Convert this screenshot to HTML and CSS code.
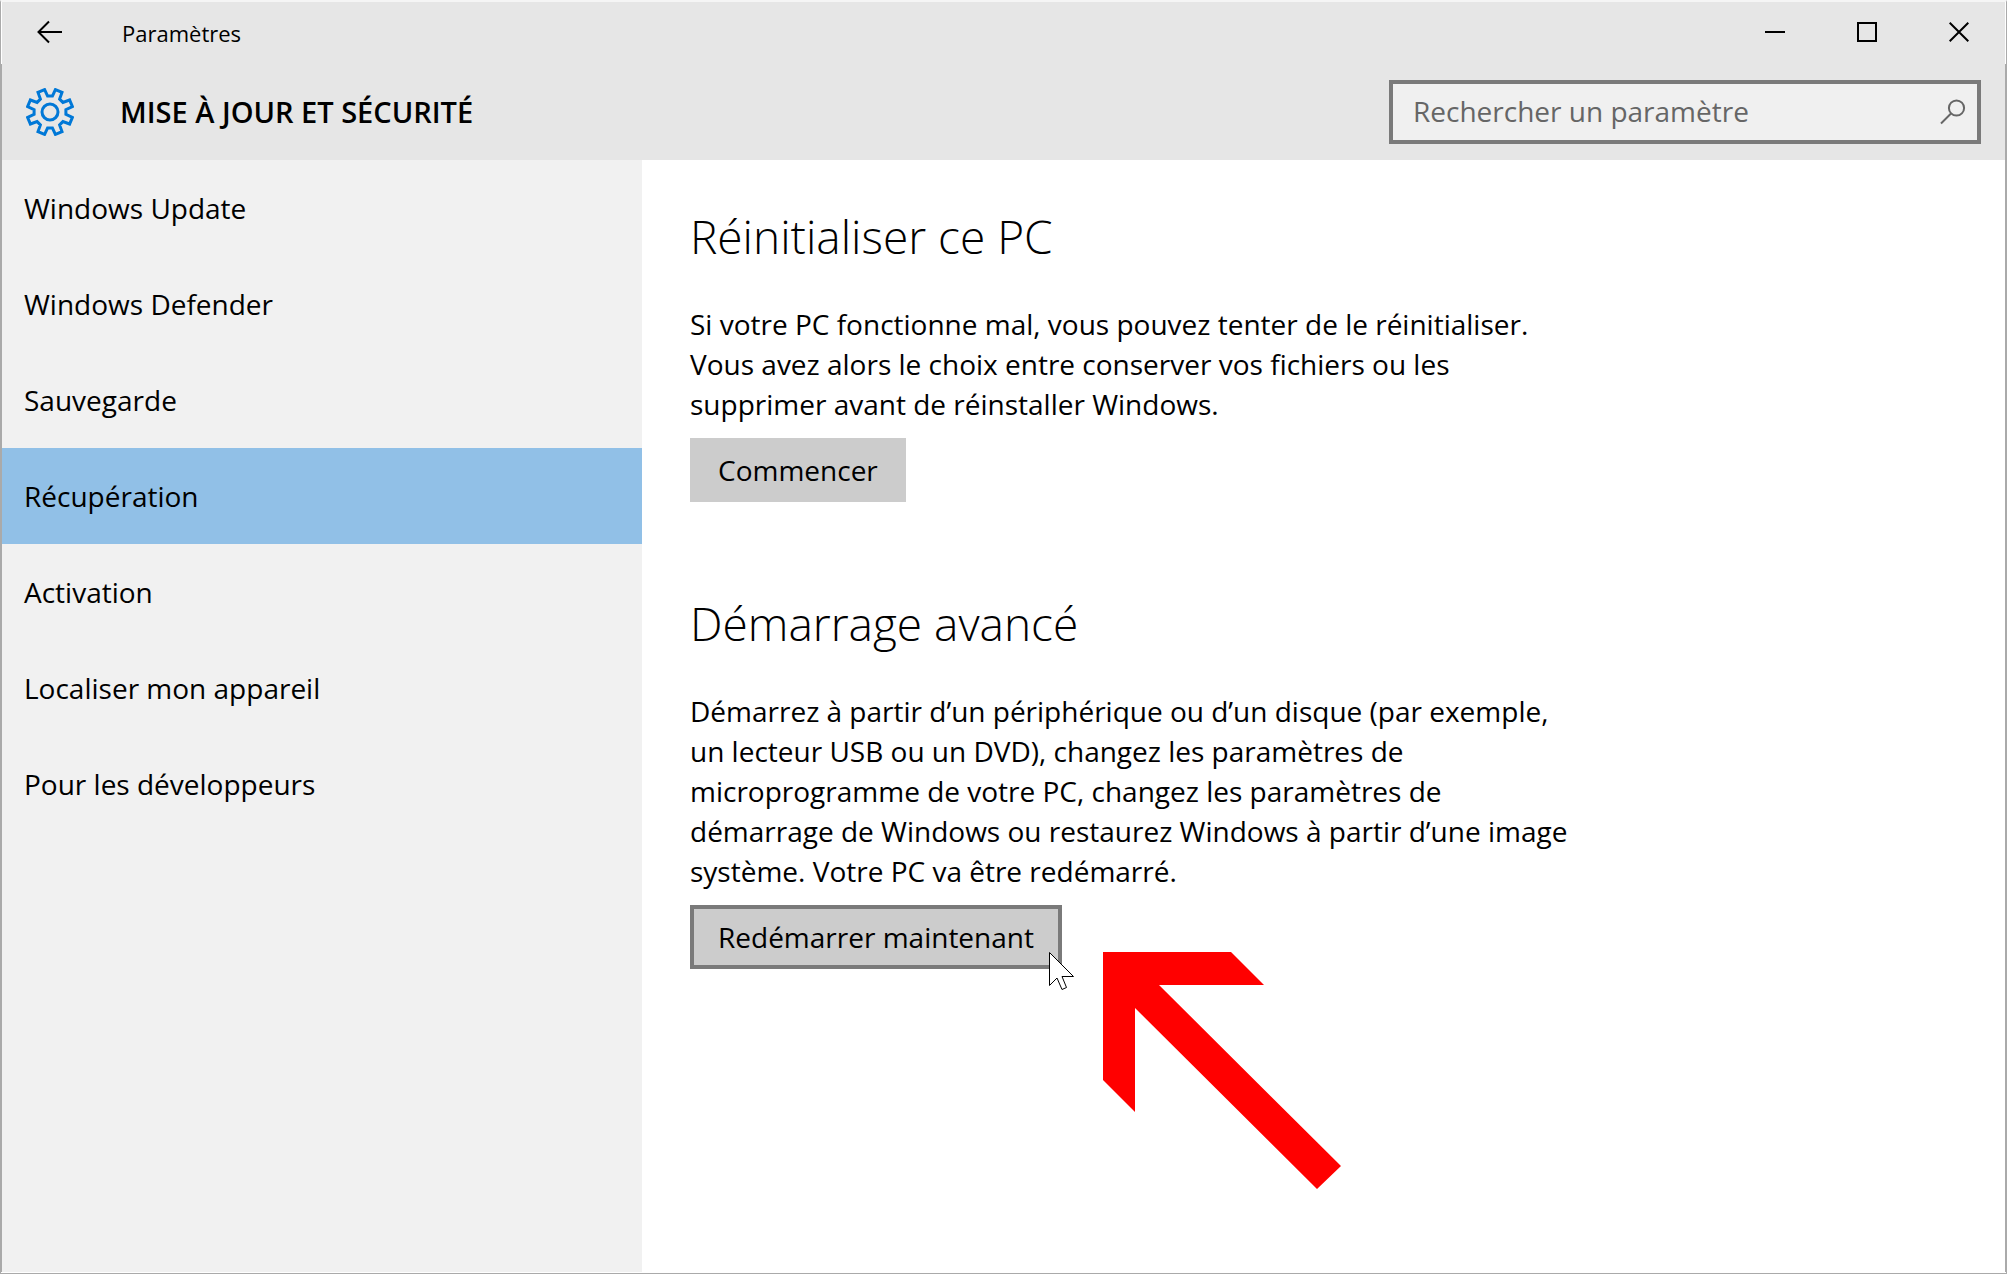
FILE: index.html
```html
<!DOCTYPE html>
<html lang="fr">
<head>
    <meta charset="UTF-8">
    <meta name="viewport" content="width=device-width, initial-scale=1.0">
    <title>Paramètres</title>
    <link rel="stylesheet" href="styles.css">
</head>
<body>

<div class="window">
    <div class="titlebar">
        <button type="button" class="back" aria-label="Retour">
            <svg width="26" height="24" viewBox="0 0 26 24"><path d="M25 12H2M12 1.5L1.5 12L12 22.5"/></svg>
        </button>
        <span class="app-name">Paramètres</span>
        <div class="window-buttons">
            <button type="button" aria-label="Réduire">
                <svg width="20" height="20" viewBox="0 0 20 20"><path d="M0 10H20"/></svg>
            </button>
            <button type="button" aria-label="Agrandir">
                <svg width="20" height="20" viewBox="0 0 20 20"><path d="M1 1H19V19H1Z"/></svg>
            </button>
            <button type="button" aria-label="Fermer">
                <svg width="20" height="20" viewBox="0 0 20 20"><path d="M.7 .7L19.3 19.3M19.3 .7L.7 19.3"/></svg>
            </button>
        </div>
    </div>

    <header class="header">
        <svg class="gear" width="48" height="48" viewBox="-24 -24 48 48">
            <path d="M2.4 -15.9L5.4 -22.4L12 -19.6L9.6 -12.9L12.9 -9.6L19.6 -12L22.4 -5.4L15.9 -2.4V2.4L22.4 5.4L19.6 12L12.9 9.6L9.6 12.9L12 19.6L5.4 22.4L2.4 15.9H-2.4L-5.4 22.4L-12 19.6L-9.6 12.9L-12.9 9.6L-19.6 12L-22.4 5.4L-15.9 2.4V-2.4L-22.4 -5.4L-19.6 -12L-12.9 -9.6L-9.6 -12.9L-12 -19.6L-5.4 -22.4L-2.4 -15.9Z"/>
            <circle r="8"/>
        </svg>
        <h1>MISE À JOUR ET SÉCURITÉ</h1>
        <form class="search">
            <input type="text" id="search" placeholder="Rechercher un paramètre" aria-label="Rechercher un paramètre">
            <button type="submit" aria-label="Rechercher">
                <svg width="26" height="26" viewBox="0 0 26 26"><circle cx="16.5" cy="9" r="7.6"/><path d="M11 14.5L1 24.5"/></svg>
            </button>
        </form>
    </header>

    <div class="main">
        <nav class="sidebar">
            <a href="#">Windows Update</a>
            <a href="#">Windows Defender</a>
            <a href="#">Sauvegarde</a>
            <a href="#" class="active">Récupération</a>
            <a href="#">Activation</a>
            <a href="#">Localiser mon appareil</a>
            <a href="#">Pour les développeurs</a>
        </nav>

        <main class="content">
            <section>
                <h2>Réinitialiser ce PC</h2>
                <p>Si votre PC fonctionne mal, vous pouvez tenter de le réinitialiser.<br>
                Vous avez alors le choix entre conserver vos fichiers ou les<br>
                supprimer avant de réinstaller Windows.</p>
                <button type="button" class="btn">Commencer</button>
            </section>

            <section>
                <h2>Démarrage avancé</h2>
                <p>Démarrez à partir d’un périphérique ou d’un disque (par exemple,<br>
                un lecteur USB ou un DVD), changez les paramètres de<br>
                microprogramme de votre PC, changez les paramètres de<br>
                démarrage de Windows ou restaurez Windows à partir d’une image<br>
                système. Votre PC va être redémarré.</p>
                <div class="restart">
                    <button type="button" class="btn focused">Redémarrer maintenant</button>
                    <svg class="cursor" width="26" height="39" viewBox="0 0 26 39">
                        <path d="M.5 .5V33.5L8 26L13 37.5L17.5 35.5L13 24.5H24.5Z"/>
                    </svg>
                    <svg class="arrow" width="238" height="237" viewBox="0 0 238 237">
                        <path d="M0 0H128L161 33H56L238 214L214 237L32 56V160L0 128Z"/>
                    </svg>
                </div>
            </section>
        </main>
    </div>
</div>

</body>
</html>
```

FILE: styles.css
```css
* {
    box-sizing: border-box;
}
body {
    margin: 0;
    font-family: "Segoe UI", "Open Sans", "Noto Sans", sans-serif;
    font-size: 28px;
    color: #000;
}
button {
    font: inherit;
    color: inherit;
    border: none;
    background: none;
    padding: 0;
}
svg {
    display: block;
    fill: none;
    stroke: #000;
    stroke-width: 2;
}
.window {
    display: flex;
    flex-direction: column;
    min-height: 100vh;
    border: 1px solid #aaa;
    border-top: 2px solid #f5f5f5;
    background: #fff;
}

/* title bar */
.titlebar {
    display: flex;
    align-items: center;
    height: 62px;
    padding-bottom: 2px;
    border: solid #fff;
    border-width: 0 1px;
    background: #e6e6e6;
}
.back {
    display: flex;
    justify-content: center;
    width: 96px;
}
.app-name {
    padding: 2px 0 0 24px;
    font-size: 22px;
}
.window-buttons {
    display: flex;
    margin-left: auto;
}
.window-buttons button {
    display: flex;
    justify-content: center;
    width: 92px;
}

/* header */
.header {
    display: flex;
    align-items: center;
    height: 96px;
    padding: 0 24px;
    border: solid #aaa;
    border-width: 0 1px;
    background: #e6e6e6;
}
.gear {
    stroke: #0078d7;
    stroke-width: 3;
}
h1 {
    margin: 0 0 0 46px;
    padding-bottom: 2px;
    font-size: 29px;
    font-weight: 600;
}
.search {
    display: flex;
    align-items: center;
    width: 592px;
    height: 64px;
    margin-left: auto;
    padding: 0 11px 0 20px;
    border: 4px solid #7a7a7a;
    background: #f0f0f0;
}
.search input {
    flex: 1;
    min-width: 0;
    padding: 0 0 2px;
    border: none;
    outline: none;
    background: none;
    font: inherit;
}
.search input::placeholder {
    color: #666;
    opacity: 1;
}
.search svg {
    stroke: #666;
}

/* body */
.main {
    display: flex;
    flex: 1;
    margin-bottom: 1px;
    border: solid #aaa;
    border-width: 0 1px;
}
.sidebar {
    width: 640px;
    background: #f1f1f1;
}
.sidebar a {
    display: flex;
    align-items: center;
    height: 96px;
    padding-left: 22px;
    color: #000;
    text-decoration: none;
}
.sidebar .active {
    background: #91c0e7;
}
.content {
    flex: 1;
    padding: 42px 48px;
}
section {
    margin-bottom: 87px;
}
h2 {
    margin: 0 0 34px;
    font-size: 46px;
    font-weight: 300;
    line-height: 68px;
}
p {
    margin: 0 0 14px;
    line-height: 40px;
}
.btn {
    height: 64px;
    padding: 0 24px;
    border: 4px solid #ccc;
    background: #ccc;
}
.btn.focused {
    border-color: #7a7a7a;
}

/* pointer and red arrow lie over the restart button */
.restart {
    display: inline-block;
    position: relative;
}
.cursor {
    position: absolute;
    top: 47px;
    left: 359px;
    fill: #fff;
    stroke-width: 1;
}
.arrow {
    position: absolute;
    top: 47px;
    left: 413px;
    fill: #f00;
    stroke: none;
}
```
